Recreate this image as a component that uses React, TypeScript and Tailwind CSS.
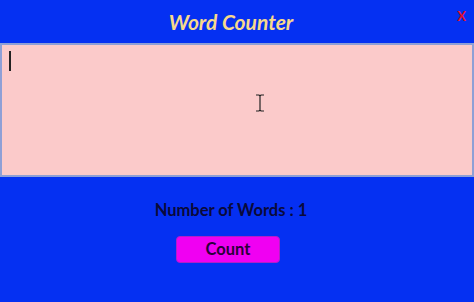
import { useState } from 'react';

export default function App() {
  const [text, setText] = useState('');
  const [count, setCount] = useState(1);

  return (
    <div
      className="relative flex h-[302px] w-[474px] flex-col items-center overflow-hidden bg-[#0530f2]"
      style={{ fontFamily: 'Lato, "Open Sans", sans-serif' }}
    >
      {/* close button */}
      <button className="absolute right-[8px] top-[10px] text-[13px] font-bold leading-none text-[#e0102a]">
        X
      </button>

      <h1 className="mr-[12px] mt-[8px] h-[28px] text-[21px] font-bold italic leading-[28px] text-[#f6d98c]">
        Word Counter
      </h1>

      <div className="relative mt-[7px] h-[134px] w-full border-2 border-[#8e9fd6] bg-[#fbcaca]">
        <textarea
          value={text}
          onChange={(e) => setText(e.target.value)}
          className="h-full w-full resize-none bg-transparent p-[6px] text-[16px] outline-none"
        />
        {/* caret */}
        <div className="pointer-events-none absolute left-[7px] top-[6px] h-[20px] w-[2px] bg-[#222]" />
        {/* mouse I-beam */}
        <svg
          className="pointer-events-none absolute left-[252px] top-[49px]"
          width="12"
          height="18"
          viewBox="0 0 12 18"
        >
          <path d="M2 1h3l1 1 1-1h3M6 2v14M2 17h3l1-1 1 1h3" stroke="#222" strokeWidth="1.2" fill="none" />
        </svg>
      </div>

      <p className="mr-[12px] mt-[23px] text-[16.5px] font-bold leading-[21px] text-[#0a0a3a]">
        Number of Words : {count}
      </p>

      <button
        onClick={() => setCount(text.trim() ? text.trim().split(/\s+/).length : 0)}
        className="mr-[18px] mt-[15px] h-[27px] w-[104px] rounded-[4px] border border-[#b020c8] bg-[#f000f2] text-[16.5px] font-bold text-[#2a0038]"
      >
        Count
      </button>
    </div>
  );
}
